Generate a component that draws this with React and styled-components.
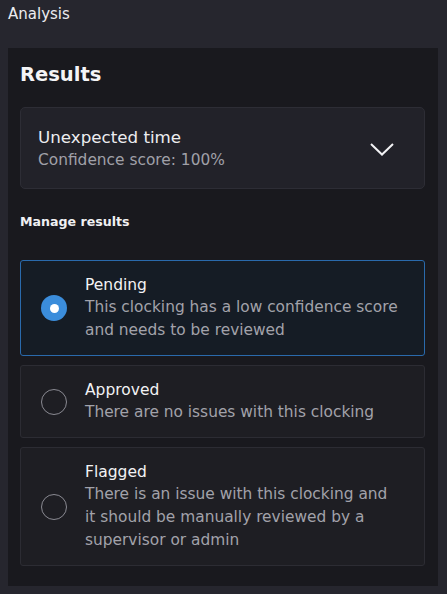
import styled, { createGlobalStyle } from "styled-components";

const GlobalStyle = createGlobalStyle`
    html, body {
        margin: 0;
        padding: 0;
        background-color: #26262e;
    }
    body {
        font-family: "DejaVu Sans", Verdana, sans-serif;
        color: #e6e6ea;
    }
`;

const Page = styled.div`
    width: 447px;
    height: 594px;
    padding: 0 9px 8px 8px;
    box-sizing: border-box;
    background-color: #26262e;
`;

const PageTitle = styled.div`
    font-size: 15px;
    line-height: 18px;
    padding-top: 5px;
    height: 48px;
    box-sizing: border-box;
    color: #ececf0;
`;

const Panel = styled.div`
    background-color: #19191e;
    padding: 16px 13px 20px 12px;
    display: flex;
    flex-direction: column;
`;

const Heading = styled.h2`
    margin: 0 0 21px;
    font-size: 19.5px;
    line-height: 22px;
    font-weight: bold;
    color: #f4f4f6;
`;

const Dropdown = styled.div`
    display: flex;
    align-items: center;
    justify-content: space-between;
    background-color: #222229;
    border: 1px solid #2d2d35;
    border-radius: 5px;
    padding: 18px 30px 16px 17px;
`;

const DropTitle = styled.div`
    font-size: 16.7px;
    line-height: 22px;
    color: #ededf0;
`;

const DropSub = styled.div`
    font-size: 15.4px;
    line-height: 24px;
    color: #a0a0a8;
`;

const SubHeading = styled.h3`
    margin: 25px 0 30px;
    font-size: 12.6px;
    line-height: 16px;
    font-weight: bold;
    color: #f0f0f2;
`;

const OptionList = styled.div`
    display: flex;
    flex-direction: column;
    gap: 9px;
`;

const Option = styled.label`
    display: flex;
    align-items: center;
    gap: 18px;
    padding: 13px 20px 13px 20px;
    border-radius: 3px;
    border: 1px solid ${(p) => (p.$active ? "#2a6aac" : "#2c2c33")};
    background-color: ${(p) => (p.$active ? "#151c25" : "#1e1e23")};
    cursor: pointer;
`;

const Radio = styled.span`
    flex-shrink: 0;
    width: 26px;
    height: 26px;
    border-radius: 50%;
    box-sizing: border-box;
    display: flex;
    align-items: center;
    justify-content: center;
    border: ${(p) => (p.$checked ? "none" : "1.5px solid #8a8a92")};
    background-color: ${(p) => (p.$checked ? "#3b8ddb" : "transparent")};

    &::after {
        content: "";
        display: ${(p) => (p.$checked ? "block" : "none")};
        width: 9px;
        height: 9px;
        border-radius: 50%;
        background-color: #ffffff;
    }
`;

const OptionText = styled.div`
    display: flex;
    flex-direction: column;
`;

const OptionTitle = styled.div`
    font-size: 15.5px;
    line-height: 22px;
    color: #f2f2f4;
`;

const OptionDesc = styled.div`
    font-size: 15.4px;
    line-height: 23px;
    color: #a2a2aa;
    white-space: nowrap;
`;

const options = [
    {
        key: "pending",
        title: "Pending",
        desc: ["This clocking has a low confidence score", "and needs to be reviewed"],
    },
    {
        key: "approved",
        title: "Approved",
        desc: ["There are no issues with this clocking"],
    },
    {
        key: "flagged",
        title: "Flagged",
        desc: ["There is an issue with this clocking and", "it should be manually reviewed by a", "supervisor or admin"],
    },
];

function App() {
    const selected = "pending";

    return (
        <>
            <GlobalStyle />
            <Page>
                <PageTitle>Analysis</PageTitle>
                <Panel>
                    <Heading>Results</Heading>
                    <Dropdown>
                        <div>
                            <DropTitle>Unexpected time</DropTitle>
                            <DropSub>Confidence score: 100%</DropSub>
                        </div>
                        <svg width="24" height="13" viewBox="0 0 24 13" fill="none">
                            <path d="M1 1 L12 11.5 L23 1" stroke="#f2f2f4" strokeWidth="2" />
                        </svg>
                    </Dropdown>

                    <SubHeading>Manage results</SubHeading>

                    <OptionList>
                        {options.map((opt) => (
                            <Option key={opt.key} $active={opt.key === selected}>
                                <Radio $checked={opt.key === selected} />
                                <OptionText>
                                    <OptionTitle>{opt.title}</OptionTitle>
                                    <OptionDesc>
                                        {opt.desc.map((line) => (
                                            <div key={line}>{line}</div>
                                        ))}
                                    </OptionDesc>
                                </OptionText>
                            </Option>
                        ))}
                    </OptionList>
                </Panel>
            </Page>
        </>
    );
}

export default App;
